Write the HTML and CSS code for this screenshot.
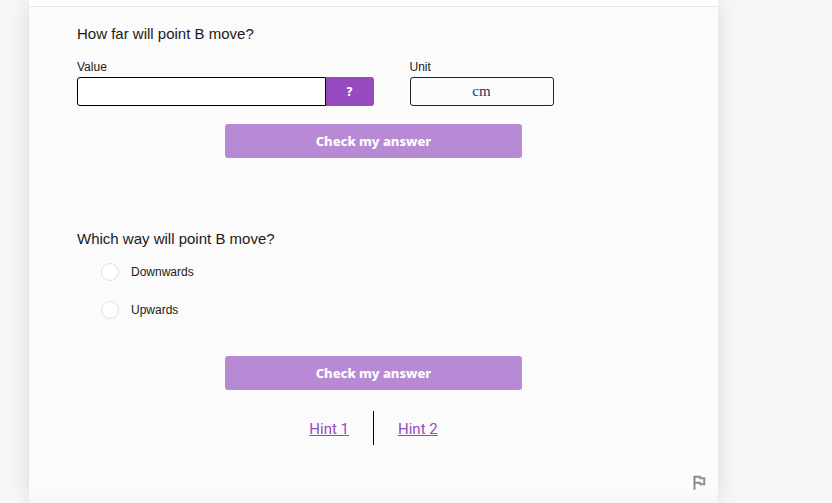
FILE: index.html
```html
<!DOCTYPE html>
<html lang="en">
<head>
  <meta charset="UTF-8">
  <meta name="viewport" content="width=device-width, initial-scale=1.0">
  <title>Question</title>
  <link rel="stylesheet" href="styles.css">
</head>
<body>
  <main class="panel">
    <div class="panel-top"></div>

    <form class="question">
      <h2>How far will point B move?</h2>
      <div class="answer-row">
        <div class="value-field">
          <label for="value">Value</label>
          <div class="input-group">
            <input type="text" id="value">
            <button type="button" class="help">?</button>
          </div>
        </div>
        <div class="unit-field">
          <label for="unit">Unit</label>
          <input type="text" id="unit" value="cm" readonly>
        </div>
      </div>
      <button type="button" class="check">Check my answer</button>
    </form>

    <form class="question second">
      <h2>Which way will point B move?</h2>
      <div class="options">
        <label><input type="radio" name="direction">Downwards</label>
        <label><input type="radio" name="direction">Upwards</label>
      </div>
      <button type="button" class="check">Check my answer</button>
    </form>

    <nav class="hints">
      <a href="#">Hint 1</a>
      <a href="#">Hint 2</a>
    </nav>

    <footer class="panel-footer">
      <button type="button" class="flag" aria-label="Flag">
        <svg width="18" height="18" viewBox="0 0 24 24" fill="#8c8c8c" stroke="#8c8c8c" stroke-width="0.6">
          <path d="M12.4 6l.4 2H18v6h-3.4l-.4-2H7V6h5.4M14 4H5v18h2v-8h5.6l.4 2h7V6h-5.6L14 4z"/>
        </svg>
      </button>
    </footer>
  </main>
</body>
</html>
```

FILE: styles.css
```css
* { box-sizing: border-box; }

body {
  margin: 0;
  background: #f7f7f7;
  color: #1a1a1a;
  font-family: "Liberation Sans", Arial, sans-serif;
  font-size: 12px;
}

.panel {
  display: flex;
  flex-direction: column;
  min-height: 100vh;
  margin: 0 114px 0 29px;
  background: linear-gradient(to top, #f6f6f6, #fbfbfb 14px);
  box-shadow: 0 0 20px rgba(0, 0, 0, 0.12);
}
.panel-top {
  height: 7px;
  background: #fff;
  border-bottom: 1px solid #e8e8e8;
}

.question { padding: 18px 48px 0; }
.second { padding-top: 72px; }

h2 {
  margin: 0;
  font-size: 15px;
  font-weight: normal;
  line-height: 18px;
}

.answer-row {
  display: flex;
  gap: 36px;
  margin-top: 16px;
}
.answer-row label {
  display: block;
  line-height: 16px;
  margin-bottom: 2px;
}
.value-field { width: 50%; }
.input-group { display: flex; }
.unit-field { width: 144px; }

input[type="text"] {
  display: block;
  width: 100%;
  height: 29px;
  padding: 0 8px;
  border: 1px solid #000;
  border-radius: 3px;
  background: #fff;
}
#value {
  flex: 1;
  min-width: 0;
  border-radius: 3px 0 0 3px;
}
#unit {
  border-color: #222;
  background: transparent;
  color: #1b3a57;
  font-family: "Liberation Serif", "Times New Roman", serif;
  font-size: 15px;
  text-align: center;
}

button {
  border: 0;
  padding: 0;
  color: #fff;
  font-family: "Noto Sans", sans-serif;
  font-weight: 800;
}
.help {
  width: 48px;
  background: #954bbd;
  border-radius: 0 3px 3px 0;
  font-size: 12px;
}
.check {
  display: block;
  width: 50%;
  height: 34px;
  margin: 18px auto 0;
  background: #b88ad6;
  border-radius: 3px;
  font-size: 13px;
}

.options {
  display: flex;
  flex-direction: column;
  gap: 20px;
  margin: 15px 0 37px 24px;
}
.options label {
  display: flex;
  align-items: center;
  gap: 12px;
  line-height: 18px;
}
.options input {
  appearance: none;
  width: 18px;
  height: 18px;
  margin: 0;
  border: 1px solid #dfe1e5;
  border-radius: 50%;
  background: #fff;
}

.hints {
  display: flex;
  justify-content: center;
  margin-top: 21px;
}
.hints a {
  padding: 0 24px;
  color: #954bbd;
  font-family: Roboto, sans-serif;
  font-size: 15px;
  line-height: 36px;
  height: 34px;
}
.hints a + a { border-left: 1px solid #000; }

.panel-footer {
  display: flex;
  justify-content: flex-end;
  margin-top: auto;
  padding: 0 10px 12px;
}
.flag {
  display: flex;
  background: none;
}
```
